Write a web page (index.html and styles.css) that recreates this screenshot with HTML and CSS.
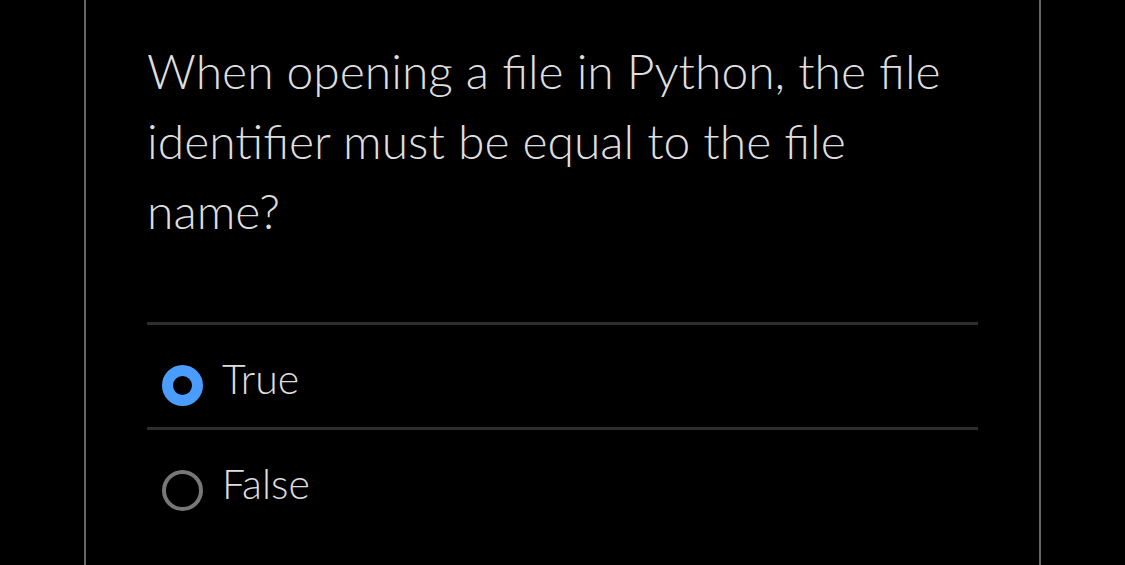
FILE: index.html
```html
<!DOCTYPE html>
<html lang="en">
<head>
<meta charset="utf-8">
<title>Quiz</title>
<link rel="stylesheet" href="styles.css">
</head>
<body>
<main class="card">
  <p class="question">When opening a file in Python, the file identifier must be equal to the file name?</p>
  <ul class="options">
    <li class="option">
      <span class="radio radio-checked"></span>
      <span class="label">True</span>
    </li>
    <li class="option">
      <span class="radio"></span>
      <span class="label">False</span>
    </li>
  </ul>
</main>
</body>
</html>
```

FILE: styles.css
```css
html, body {
  margin: 0;
  padding: 0;
  background: #000;
}

body {
  font-family: "Lato", "Liberation Sans", sans-serif;
  font-weight: 300;
  color: #dedede;
  height: 565px;
  overflow: hidden;
}

.card {
  box-sizing: border-box;
  margin-left: 84px;
  width: 957px;
  height: 565px;
  border-left: 2px solid #666;
  border-right: 2px solid #666;
  padding: 36px 61px 0 61px;
}

.question {
  margin: 0;
  font-size: 48px;
  line-height: 70px;
  letter-spacing: 0;
}

.options {
  list-style: none;
  margin: 76px 0 0 0;
  padding: 0;
}

.option {
  display: flex;
  align-items: flex-start;
  border-top: 3px solid #2e2e2e;
  padding: 30px 0 21px 0;
}

.label {
  font-size: 41px;
  line-height: 48px;
  height: 48px;
}

.radio {
  box-sizing: border-box;
  width: 41px;
  height: 41px;
  border-radius: 50%;
  border: 4px solid #77777a;
  margin: 10px 19px 0 15px;
  flex: none;
}

.radio-checked {
  border: 11px solid #4a9dff;
  background: #000;
}
```
